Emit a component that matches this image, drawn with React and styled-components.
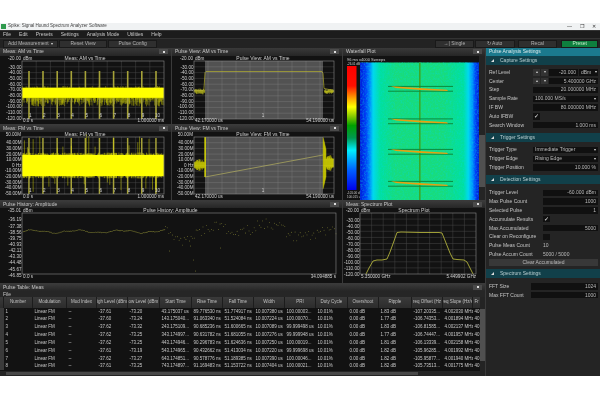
import React from "react";
import styled, { createGlobalStyle } from "styled-components";

const Global = createGlobalStyle`
    html, body { margin: 0; background: #fff; }
    body { font-family: "Liberation Sans", Arial, sans-serif; }
`

const Window = styled.div`
    margin-top: 23px;
    height: 353px;
    width: 600px;
    display: flex;
    flex-direction: column;
    background: #1d1d1d;
    color: #c8c8c8;
    font-size: 5px;
    line-height: 1;
    overflow: hidden;
    filter: blur(0.25px);
`

const TitleBar = styled.div`
    height: 7px;
    flex: none;
    display: flex;
    align-items: center;
    gap: 2px;
    padding: 0 4px 0 1px;
    background: #f0f2f3;
    border-bottom: 1px solid #333;
    color: #444;
    font-size: 4.5px;
`

const AppIcon = styled.span`
    width: 5px;
    height: 5px;
    background: #2f9a4d;
`

const WinButtons = styled.div`
    margin-left: auto;
    display: flex;
    gap: 8px;
    align-items: center;
    color: #333;
    font-size: 5px;
`

const MenuBar = styled.div`
    height: 7px;
    flex: none;
    display: flex;
    align-items: center;
    gap: 8px;
    padding: 0 3px;
    background: #1c1c1c;
    & span { color: #c8c8c8; }
`

const Toolbar = styled.div`
    height: 9px;
    flex: none;
    display: flex;
    align-items: center;
    gap: 1px;
    padding: 0 2px 0 3px;
    background: #232323;
    border-top: 1px solid #333;
`

const ToolButton = styled.div`
    width: ${p => p.$w}px;
    margin-left: ${p => p.$gap || 0}px;
    height: 8px;
    display: flex;
    align-items: center;
    justify-content: center;
    gap: 2px;
    color: ${p => p.$green ? "#c4ecc8" : "#b0b0b0"};
    background: ${p => p.$green ? "#0e7f3e" : "#2f2f2f"};
    border: 1px solid #191919;
    box-sizing: border-box;
`

const Main = styled.div`
    flex: 1;
    min-height: 0;
    display: grid;
    grid-template-columns: 485px 115px;
`

const Workspace = styled.div`
    display: grid;
    grid-template-columns: 171px 170px 142px;
    grid-template-rows: 75.5px 75px 82px 1fr;
    gap: 1px 1px;
    background: #3a3a3a;
    min-height: 0;
    padding-right: 1px;
`

const Panel = styled.div`
    display: flex;
    flex-direction: column;
    min-width: 0;
    min-height: 0;
    background: #121212;
    grid-column: ${p => p.$col || "auto"};
    grid-row: ${p => p.$row || "auto"};
`

const PanelHead = styled.div`
    height: 7.5px;
    flex: none;
    display: flex;
    align-items: center;
    justify-content: space-between;
    padding: 0 3px;
    background: linear-gradient(#3a3a3a, #262626);
    color: #c8c8c8;
`

const HeadMenu = styled.span`
    width: 9px;
    height: 5px;
    background: #4a4a4a;
    display: flex;
    align-items: center;
    justify-content: center;
    &::after {
        content: "";
        width: 2px;
        height: 2px;
        background: #ddd;
    }
`

const PlotBody = styled.div`
    flex: 1;
    min-height: 0;
    overflow: hidden;
    & svg { display: block; width: 100%; height: 100%; }
`

const Axis = styled.text`
    font-size: ${p => p.$size || 4.6}px;
    font-family: "Liberation Sans", Arial, sans-serif;
    fill: #d0d0d0;
`

const Side = styled.div`
    background: #242424;
    border-left: 1px solid #3a3a3a;
    display: flex;
    flex-direction: column;
    min-height: 0;
`

const SideTitle = styled.div`
    height: 7.5px;
    flex: none;
    display: flex;
    align-items: center;
    padding-left: 3px;
    background: #1b7a8e;
    color: #d8e8ea;
`

const Section = styled.div`
    height: 9px;
    flex: none;
    display: flex;
    align-items: center;
    gap: 6px;
    padding-left: 5px;
    background: #11404a;
    color: #b8cdd0;
    &::before {
        content: "";
        width: 0;
        height: 0;
        border-left: 3px solid transparent;
        border-bottom: 3px solid #ddd;
    }
`

const SectionBody = styled.div`
    flex: none;
    display: flex;
    flex-direction: column;
    padding: ${p => p.$top}px 2px ${p => p.$bottom}px 3px;
`

const Row = styled.div`
    height: 8.8px;
    flex: none;
    display: flex;
    align-items: center;
    gap: 1px;
`

const Label = styled.span`
    width: ${p => p.$w}px;
    flex: none;
    white-space: nowrap;
    color: #c4c4c4;
`

const Field = styled.div`
    flex: 1;
    min-width: 0;
    height: 6.5px;
    display: flex;
    align-items: center;
    justify-content: ${p => p.$left ? "space-between" : "flex-end"};
    padding: 0 2px;
    background: #101010;
    color: #bcbcbc;
    white-space: nowrap;
`

const Step = styled.span`
    width: 7px;
    height: 6.5px;
    flex: none;
    background: #333;
    display: flex;
    align-items: center;
    justify-content: center;
    color: #ccc;
    font-size: 4px;
`

const Unit = styled.span`
    width: 19px;
    flex: none;
    height: 6.5px;
    display: flex;
    align-items: center;
    justify-content: space-between;
    padding: 0 1px 0 2px;
    box-sizing: border-box;
    background: #101010;
    color: #bcbcbc;
`

const Arrow = styled.span`
    width: 0;
    height: 0;
    border-left: 1.5px solid transparent;
    border-right: 1.5px solid transparent;
    border-top: 2px solid #ddd;
`

const Check = styled.span`
    width: 6.5px;
    height: 6.5px;
    background: #111;
    color: #eee;
    font-size: 6px;
    display: flex;
    align-items: center;
    justify-content: center;
`

const Plain = styled.span`
    color: #bcbcbc;
`

const WideButton = styled.div`
    height: 7.5px;
    display: flex;
    align-items: center;
    justify-content: center;
    background: #383838;
    color: #bcbcbc;
`

const FileBar = styled.div`
    height: 6px;
    flex: none;
    display: flex;
    align-items: center;
    padding-left: 3px;
    background: #262626;
    color: #c4c4c4;
`

const TableWrap = styled.div`
    flex: 1;
    min-height: 0;
    display: grid;
    grid-template-columns: 1fr 5px;
`

const TableMain = styled.div`
    min-width: 0;
    display: flex;
    flex-direction: column;
    overflow: hidden;
`

const cols = "4px 29px 34px 30px 31px 32px 32px 31px 31px 31px 31px 32px 31px 33px 31px 30px 8px"

const HeadRow = styled.div`
    display: grid;
    grid-template-columns: ${cols};
    height: 10.5px;
    flex: none;
    background: #333;
`

const HeadCell = styled.div`
    display: flex;
    align-items: center;
    justify-content: center;
    overflow: hidden;
    white-space: nowrap;
    border-right: 1px solid #1c1c1c;
    color: #c0c0c0;
    font-size: 4.5px;
    background: linear-gradient(#3a3a3a, #2c2c2c);
`

const DataRow = styled.div`
    display: grid;
    grid-template-columns: ${cols};
    height: 7.85px;
    flex: none;
    background: #121212;
    align-items: stretch;
`

const RowHead = styled.div`
    background: #3a3a3a;
`

const Cell = styled.div`
    padding-left: 1.5px;
    overflow: hidden;
    white-space: nowrap;
    color: #c8c8c8;
    font-size: 4.5px;
    line-height: 7.85px;
`

const HScroll = styled.div`
    height: 5.5px;
    flex: none;
    margin-top: auto;
    background: #242424;
    display: flex;
    padding: 1px 6px;
    box-sizing: border-box;
    &::before {
        content: "";
        width: 88%;
        background: #484848;
    }
`

const VScroll = styled.div`
    background: #242424;
    display: flex;
    flex-direction: column;
    padding: ${p => p.$pad}px 0;
    &::before {
        content: "";
        height: ${p => p.$h}px;
        margin-top: ${p => p.$top}px;
        background: #505050;
    }
`

const WaterBody = styled.div`
    flex: 1;
    min-height: 0;
    display: grid;
    grid-template-columns: 1fr 6px;
    & svg { display: block; width: 100%; height: 100%; }
`

function rng(seed) {
    let a = seed
    return () => {
        a = (a + 0x6d2b79f5) | 0
        let t = Math.imul(a ^ (a >>> 15), 1 | a)
        t = (t + Math.imul(t ^ (t >>> 7), 61 | t)) ^ t
        return ((t ^ (t >>> 14)) >>> 0) / 4294967296
    }
}

const ticksAM = ["-30.00", "-40.00", "-50.00", "-60.00", "-70.00", "-80.00", "-90.00", "-100.00", "-110.00", "-120.00"]
const ticksFM = ["40.00M", "30.00M", "20.00M", "10.00M", "0 Hz", "-10.00M", "-20.00M", "-30.00M", "-40.00M", "-50.00M"]
const ticksHist = ["-36.19", "-37.38", "-38.56", "-39.75", "-40.93", "-42.11", "-43.30", "-44.48", "-45.67", "-46.85"]
const ticksSpec = ["-30.00", "-40.00", "-50.00", "-60.00", "-70.00", "-80.00", "-90.00", "-100.00", "-110.00", "-120.00"]

function Plot({ view, area, head, title, titleX, ticks, first, step, nx = 10, ny = 10, left, right, bottomY, children }) {
    const [x0, y0, x1, y1] = area
    const v = []
    for (let i = 1; i < nx; i++) {
        const x = x0 + (x1 - x0) * i / nx
        v.push(<line key={"v" + i} x1={x} x2={x} y1={y0} y2={y1} stroke="#464646" strokeWidth="0.5" />)
    }
    for (let i = 1; i < ny; i++) {
        const y = y0 + (y1 - y0) * i / ny
        v.push(<line key={"h" + i} x1={x0} x2={x1} y1={y} y2={y} stroke="#464646" strokeWidth="0.5" />)
    }
    return (
        <svg viewBox={view.join(" ")} preserveAspectRatio="none">
            <Axis x={x0 - 1} y={y0 - 1} textAnchor="end">{head[0]}</Axis>
            <Axis x={x0 + 1} y={y0 - 1}>{head[1]}</Axis>
            <Axis x={titleX} y={y0 - 1} textAnchor="middle" $size={5}>{title}</Axis>
            {ticks.map((t, i) => (
                <Axis key={t} x={x0 - 0.5} y={first + step * i + 1.7} textAnchor="end">{t}</Axis>
            ))}
            {v}
            {children}
            <rect x={x0} y={y0} width={x1 - x0} height={y1 - y0} fill="none" stroke="#8a8a8a" strokeWidth="0.6" />
            <Axis x={x0 + 1} y={bottomY}>{left}</Axis>
            <Axis x={x1} y={bottomY} textAnchor="end">{right}</Axis>
        </svg>
    )
}

function noisePath(r, x0, x1, dx, fn) {
    let d = ""
    for (let x = x0; x < x1; x += dx) {
        const [a, b] = fn(x, r)
        d += `M${x.toFixed(2)} ${a.toFixed(2)}V${b.toFixed(2)}`
    }
    return d
}

const pulses = [29, 43, 57.2, 71.3, 85.4, 99.5, 113.6, 127.7, 141.8, 156]

function MeasAM() {
    const r = rng(7)
    const d = noisePath(r, 22.3, 163.7, 0.35, (x, q) => {
        const up = q() < 0.15 ? 85.5 + q() * 1.5 : 87.2
        const low = 97 + Math.pow(q(), 1.9) * 9
        return [up, low]
    })
    return (
        <Plot view={[0, 55.5, 171, 68]} area={[22, 60.5, 164, 118.5]} head={["-20.00", "dBm"]} title="Meas: AM vs Time" titleX={85}
            ticks={ticksAM} first={66.6} step={5.66} left="0.0 s" right="1.000000 ms" bottomY={121.5}>
            <path d={d} stroke="#d8d800" strokeWidth="0.4" fill="none" />
            {pulses.map(x => <rect key={x} x={x - 0.8} y="70.5" width="1.6" height="48" fill="#a6a238" />)}
            <rect x="22.3" y="87.3" width="141.4" height="10" fill="#ffff00" />
            {pulses.map((x, i) => <Axis key={i} x={x + (i === 9 ? -1 : 0)} y="116">{i + 1}</Axis>)}
        </Plot>
    )
}

function MeasFM() {
    const r = rng(21)
    const d = noisePath(r, 22.3, 163.7, 0.35, (x, q) => {
        const amp = 9 + q() * 4
        return [165.5 - amp - (q() < 0.06 ? 6 + q() * 14 : 0), 165.5 + amp + (q() < 0.06 ? 6 + q() * 14 : 0)]
    })
    return (
        <Plot view={[0, 132, 171, 67.5]} area={[22, 137, 164, 194]} head={["50.00M", ""]} title="Meas: FM vs Time" titleX={85}
            ticks={ticksFM} first={142.5} step={5.65} left="0.0 s" right="1.000000 ms" bottomY={197.5}>
            {pulses.map(x => <rect key={x} x={x - 0.8} y="138" width="1.5" height="56" fill="#a6a238" />)}
            <path d={d} stroke="#f4f400" strokeWidth="0.4" fill="none" />
            <rect x="22.3" y="155" width="141.4" height="21" fill="#ffff00" />
            {pulses.map((x, i) => <Axis key={i} x={x + (i === 9 ? -1 : 0)} y="192">{i + 1}</Axis>)}
        </Plot>
    )
}

function PulseAM() {
    const r = rng(3)
    const pre = noisePath(r, 194.2, 205, 0.3, (x, q) => [88 + q() * 2.2, 91 + q() * 3])
    const post = noisePath(r, 324.5, 334, 0.3, (x, q) => [88.5 + q() * 2, 91 + q() * 2.5])
    return (
        <Plot view={[172, 55.5, 170, 68]} area={[194, 60.5, 334, 118.5]} head={["-20.00", "dBm"]} title="Pulse View: AM vs Time" titleX={263}
            ticks={ticksAM} first={66.6} step={5.66} left="42.170000 us" right="54.190000 us" bottomY={121.5}>
            <rect x="205" y="60.5" width="118" height="58" fill="#fff" opacity="0.27" />
            <path d={pre} stroke="#c8c820" strokeWidth="0.4" fill="none" />
            <path d={post} stroke="#e0e020" strokeWidth="0.4" fill="none" />
            <path d="M194 90 L203 90 L204 88 L205 72 L206 71 L322 71 L323 73 L324 88 L334 90" stroke="#b4b030" strokeWidth="0.7" fill="none" />
            <Axis x="263" y="116" textAnchor="middle">1</Axis>
        </Plot>
    )
}

function PulseFM() {
    const r = rng(5)
    const pre = noisePath(r, 194.2, 204.5, 0.3, (x, q) => {
        const a = 2.5 + 4 * Math.abs(Math.sin((x - 194) / 3.4)) * q()
        return [165 - a, 165 + a]
    })
    const post = noisePath(r, 323.2, 334, 0.3, (x, q) => {
        const a = x < 326 ? 22 * (1 - (x - 323) / 5) + 5 : 4 + 5 * Math.abs(Math.sin((x - 326) / 2.2)) * q()
        return [163 - a, 163 + a]
    })
    return (
        <Plot view={[172, 132, 170, 67.5]} area={[194, 137, 334, 194]} head={["50.00M", ""]} title="Pulse View: FM vs Time" titleX={263}
            ticks={ticksFM} first={142.5} step={5.65} left="42.170000 us" right="54.190000 us" bottomY={197.5}>
            <rect x="205" y="137" width="118" height="57" fill="#fff" opacity="0.27" />
            <path d={pre} stroke="#e8e800" strokeWidth="0.4" fill="none" />
            <path d={post} stroke="#f0f000" strokeWidth="0.4" fill="none" />
            <rect x="204.4" y="137" width="1.4" height="40" fill="#e0e000" />
            <line x1="205" y1="177" x2="323" y2="155" stroke="#b4b060" strokeWidth="0.7" />
            <Axis x="263" y="192" textAnchor="middle">1</Axis>
        </Plot>
    )
}

function History() {
    const r = rng(11)
    const dots = []
    for (let x = 23; x < 165; x += 0.9) {
        const y = 231.5 + Math.sin(x / 7) * 1.2 + Math.sin(x / 2.7) * 0.6 + (r() - 0.5) * 0.6
        dots.push([x, y])
    }
    for (let x = 165; x < 335; x += 1.7) {
        const t = Math.sin(x / 9) * 5 + Math.sin(x / 23) * 4
        dots.push([x, 231 + t + (r() - 0.5) * 11])
    }
    dots.push([169, 251], [193, 260], [195, 271], [190, 246], [220, 248])
    return (
        <Plot view={[0, 208, 341, 74.5]} area={[22, 213, 335, 274]} head={["-35.01", "dBm"]} title="Pulse History: Amplitude" titleX={170} nx={1} ny={1}
            ticks={ticksHist} first={219.7} step={6.15} left="0.0 s" right="34.094885 s" bottomY={278}>
            {dots.map(([x, y], i) => <circle key={i} cx={x} cy={y} r="0.4" fill="#b0b040" />)}
        </Plot>
    )
}

function Spectrum() {
    return (
        <Plot view={[342, 208, 142, 74.5]} area={[359, 213, 475, 274]} head={["-20.00", "dBm"]} title="Spectrum Plot" titleX={413}
            ticks={ticksSpec} first={220} step={6.05} left="5.350000 GHz" right="5.449902 GHz" bottomY={278}>
            <polyline points="365,274 368,268 372,261 376,260 381,260 386,259 389,252 393,241 396,232.5 400,232 420,232.5 438,232.5 441,233 445,243 449,253 452,259 456,259.5 463,260 466,262 469,268 472,274"
                fill="none" stroke="#c4c440" strokeWidth="0.8" />
        </Plot>
    )
}

const streaks = [88, 120.5, 151, 183]

function Waterfall() {
    return (
        <svg viewBox="342 55.5 136 144" preserveAspectRatio="none">
            <defs>
                <linearGradient id="wf" x1="0" x2="1" y1="0" y2="0">
                    <stop offset="0" stopColor="#0018d8" />
                    <stop offset="0.05" stopColor="#0040f8" />
                    <stop offset="0.085" stopColor="#0090ff" />
                    <stop offset="0.11" stopColor="#00d8f0" />
                    <stop offset="0.17" stopColor="#00e0a0" />
                    <stop offset="0.3" stopColor="#18dc7c" />
                    <stop offset="0.7" stopColor="#18dc7c" />
                    <stop offset="0.87" stopColor="#00e0a0" />
                    <stop offset="0.91" stopColor="#00d8f0" />
                    <stop offset="0.945" stopColor="#0090ff" />
                    <stop offset="0.97" stopColor="#0040f8" />
                    <stop offset="1" stopColor="#0018d0" />
                </linearGradient>
                <linearGradient id="bar" x1="0" x2="0" y1="0" y2="1">
                    <stop offset="0" stopColor="#ff0000" />
                    <stop offset="0.16" stopColor="#ff1000" />
                    <stop offset="0.27" stopColor="#ffb000" />
                    <stop offset="0.33" stopColor="#ffff00" />
                    <stop offset="0.42" stopColor="#70c000" />
                    <stop offset="0.48" stopColor="#00a000" />
                    <stop offset="0.58" stopColor="#009850" />
                    <stop offset="0.68" stopColor="#00f0ff" />
                    <stop offset="0.84" stopColor="#0060ff" />
                    <stop offset="1" stopColor="#0000e8" />
                </linearGradient>
                <filter id="grain" x="0" y="0" width="100%" height="100%">
                    <feTurbulence type="fractalNoise" baseFrequency="0.55" numOctaves="2" seed="4" />
                    <feColorMatrix values="0 0 0 0 0  0 0 0 0 0.7  0 0 0 0 0.75  2.4 0 0 0 -1.0" />
                </filter>
            </defs>
            <Axis x="346" y="60.5" $size={4}>96 ms x4000 Sweeps</Axis>
            <Axis x="346" y="64.3" $size={3}>-26.01 dBm</Axis>
            <rect x="346" y="65.5" width="9.5" height="124" fill="url(#bar)" />
            <Axis x="346" y="193" $size={3}>-101.00 dBm</Axis>
            <Axis x="346" y="197" $size={3}>100.015 us</Axis>
            <rect x="359" y="62" width="119" height="137.5" fill="url(#wf)" />
            <rect x="359" y="62" width="119" height="137.5" filter="url(#grain)" opacity="0.4" />
            <rect x="418" y="62" width="1.6" height="137.5" fill="#3ca828" />
            {streaks.map(y => (
                <g key={y}>
                    <rect x="387" y={y - 2.6} width="65" height="1" fill="#0c8a3c" />
                    <rect x="387" y={y + 2.2} width="65" height="1" fill="#0c8a3c" />
                    <polygon points={`390,${y - 2.2} 410,${y - 1} 446,${y + 1.3} 447,${y + 2.4} 420,${y + 1.4} 395,${y - 0.6}`} fill="#e8a010" />
                </g>
            ))}
        </svg>
    )
}

const tableHead = ["", "Number", "Modulation", "Mod Index", "igh Level (dBm", "ow Level (dBm", "Start Time", "Rise Time", "Fall Time", "Width", "PRI", "Duty Cycle", "Overshoot", "Ripple", "req Offset (Hz", "req Slope (Hz/s", "Fr"]

const tableRows = [
    ["1", "-37.61", "-73.20", "43.175037 us", "89.776530 ns", "51.774917 ns", "10.007380 us", "100.00003...", "1.83 dB", "-107.20335...", "4.002030 MHz"],
    ["2", "-37.60", "-73.24", "143.175040...", "91.063340 ns", "51.524084 ns", "10.007224 us", "100.00070...", "1.77 dB", "-106.74353...", "4.001894 MHz"],
    ["3", "-37.62", "-73.32", "243.175109...", "90.685236 ns", "51.600665 ns", "10.007089 us", "99.999498 us", "1.83 dB", "-106.81585...", "4.002137 MHz"],
    ["4", "-37.62", "-73.25", "343.174997...", "90.631782 ns", "51.681055 ns", "10.007276 us", "99.999948 us", "1.77 dB", "-106.74447...", "4.001957 MHz"],
    ["5", "-37.62", "-73.25", "443.174946...", "90.296783 ns", "51.624636 ns", "10.007250 us", "100.00019...", "1.81 dB", "-106.13339...", "4.002158 MHz"],
    ["6", "-37.61", "-73.19", "543.174965...", "90.432662 ns", "51.413034 ns", "10.007220 us", "99.999698 us", "1.82 dB", "-105.96285...", "4.001992 MHz"],
    ["7", "-37.62", "-73.27", "643.174851...", "90.578776 ns", "51.189385 ns", "10.007390 us", "100.00046...", "1.82 dB", "-105.95877...", "4.001940 MHz"],
    ["8", "-37.61", "-73.25", "743.174897...", "91.169483 ns", "51.153722 ns", "10.007404 us", "100.00021...", "1.82 dB", "-105.73513...", "4.001775 MHz"],
]

function SettingsPanel() {
    return (
        <Side>
            <SideTitle>Pulse Analysis Settings</SideTitle>
            <Section>Capture Settings</Section>
            <SectionBody $top={3.5} $bottom={3.6}>
                <Row><Label $w={43}>Ref Level</Label><Step>▴</Step><Step>▾</Step><Field>-20.000</Field><Unit>dBm<Arrow /></Unit></Row>
                <Row><Label $w={43}>Center</Label><Step>▴</Step><Step>▾</Step><Field>5.400000 GHz</Field></Row>
                <Row><Label $w={43}>Step</Label><Field>20.000000 MHz</Field></Row>
                <Row><Label $w={43}>Sample Rate</Label><Field $left>100.000 MS/s<Arrow /></Field></Row>
                <Row><Label $w={43}>IF BW</Label><Field>80.000000 MHz</Field></Row>
                <Row><Label $w={43}>Auto IFBW</Label><Check>✓</Check></Row>
                <Row><Label $w={43}>Search Window</Label><Field>1.000 ms</Field></Row>
            </SectionBody>
            <Section>Trigger Settings</Section>
            <SectionBody $top={3.4} $bottom={3.5}>
                <Row><Label $w={43}>Trigger Type</Label><Field $left>Immediate Trigger<Arrow /></Field></Row>
                <Row><Label $w={43}>Trigger Edge</Label><Field $left>Rising Edge<Arrow /></Field></Row>
                <Row><Label $w={43}>Trigger Position</Label><Field>10.000 %</Field></Row>
            </SectionBody>
            <Section>Detection Settings</Section>
            <SectionBody $top={4} $bottom={2.6}>
                <Row><Label $w={53}>Trigger Level</Label><Field>-60.000 dBm</Field></Row>
                <Row><Label $w={53}>Max Pulse Count</Label><Field>1000</Field></Row>
                <Row><Label $w={53}>Selected Pulse</Label><Field>1</Field></Row>
                <Row><Label $w={53}>Accumulate Results</Label><Check>✓</Check></Row>
                <Row><Label $w={53}>Max Accumulated</Label><Field>5000</Field></Row>
                <Row><Label $w={53}>Clear on Reconfigure</Label><Check /></Row>
                <Row><Label $w={53}>Pulse Meas Count</Label><Plain>10</Plain></Row>
                <Row><Label $w={53}>Pulse Accum Count</Label><Plain>5000 / 5000</Plain></Row>
                <WideButton>Clear Accumulated</WideButton>
            </SectionBody>
            <Section>Spectrum Settings</Section>
            <SectionBody $top={4} $bottom={0}>
                <Row><Label $w={41}>FFT Size</Label><Field>1024</Field></Row>
                <Row><Label $w={41}>Max FFT Count</Label><Field>1000</Field></Row>
            </SectionBody>
        </Side>
    )
}

function PulseTable() {
    return (
        <Panel $col="1 / -1" $row="4">
            <PanelHead>Pulse Table: Meas<HeadMenu /></PanelHead>
            <FileBar>File</FileBar>
            <TableWrap>
                <TableMain>
                    <HeadRow>
                        {tableHead.map((h, i) => <HeadCell key={i}>{h}</HeadCell>)}
                    </HeadRow>
                    {tableRows.map(r => (
                        <DataRow key={r[0]}>
                            <RowHead />
                            <Cell>{r[0]}</Cell>
                            <Cell>Linear FM</Cell>
                            <Cell>--</Cell>
                            <Cell>{r[1]}</Cell>
                            <Cell>{r[2]}</Cell>
                            <Cell>{r[3]}</Cell>
                            <Cell>{r[4]}</Cell>
                            <Cell>{r[5]}</Cell>
                            <Cell>{r[6]}</Cell>
                            <Cell>{r[7]}</Cell>
                            <Cell>10.01%</Cell>
                            <Cell>0.00 dB</Cell>
                            <Cell>{r[8]}</Cell>
                            <Cell>{r[9]}</Cell>
                            <Cell>{r[10]}</Cell>
                            <Cell>40</Cell>
                        </DataRow>
                    ))}
                    <HScroll />
                </TableMain>
                <VScroll $pad={6} $h={52} $top={6} />
            </TableWrap>
        </Panel>
    )
}

export default function App() {
    return (
        <>
            <Global />
            <Window>
                <TitleBar>
                    <AppIcon />
                    Spike: Signal Hound Spectrum Analyzer Software
                    <WinButtons><span>—</span><span>❐</span><span>✕</span></WinButtons>
                </TitleBar>
                <MenuBar>
                    {["File", "Edit", "Presets", "Settings", "Analysis Mode", "Utilities", "Help"].map(m => <span key={m}>{m}</span>)}
                </MenuBar>
                <Toolbar>
                    <ToolButton $w={55}>Add Measurement <Arrow /></ToolButton>
                    <ToolButton $w={49}>Reset View</ToolButton>
                    <ToolButton $w={49}>Pulse Config</ToolButton>
                    <ToolButton $w={39} $gap={277}>→| Single</ToolButton>
                    <ToolButton $w={40}>↻ Auto</ToolButton>
                    <ToolButton $w={40} $gap={2}>Recal</ToolButton>
                    <ToolButton $w={37} $gap={3} $green>Preset</ToolButton>
                </Toolbar>
                <Main>
                    <Workspace>
                        <Panel $col="1" $row="1"><PanelHead>Meas: AM vs Time<HeadMenu /></PanelHead><PlotBody><MeasAM /></PlotBody></Panel>
                        <Panel $col="2" $row="1"><PanelHead>Pulse View: AM vs Time<HeadMenu /></PanelHead><PlotBody><PulseAM /></PlotBody></Panel>
                        <Panel $col="3" $row="1 / span 2">
                            <PanelHead>Waterfall Plot<HeadMenu /></PanelHead>
                            <WaterBody><Waterfall /><VScroll $pad={5} $h={52} $top={74} /></WaterBody>
                        </Panel>
                        <Panel $col="1" $row="2"><PanelHead>Meas: FM vs Time<HeadMenu /></PanelHead><PlotBody><MeasFM /></PlotBody></Panel>
                        <Panel $col="2" $row="2"><PanelHead>Pulse View: FM vs Time<HeadMenu /></PanelHead><PlotBody><PulseFM /></PlotBody></Panel>
                        <Panel $col="1 / span 2" $row="3"><PanelHead>Pulse History: Amplitude<HeadMenu /></PanelHead><PlotBody><History /></PlotBody></Panel>
                        <Panel $col="3" $row="3"><PanelHead>Meas: Spectrum Plot<HeadMenu /></PanelHead><PlotBody><Spectrum /></PlotBody></Panel>
                        <PulseTable />
                    </Workspace>
                    <SettingsPanel />
                </Main>
            </Window>
        </>
    )
}
